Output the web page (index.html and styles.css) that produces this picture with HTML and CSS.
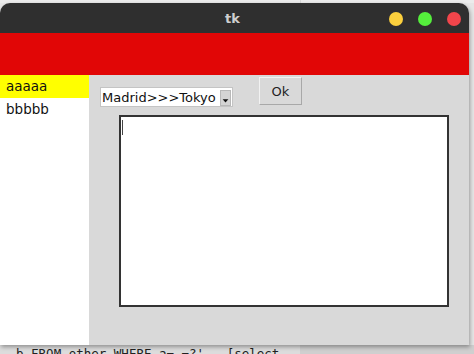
FILE: index.html
```html
<!DOCTYPE html>
<html lang="en">

<head>
    <meta charset="UTF-8">
    <meta name="viewport" content="width=device-width, initial-scale=1.0">
    <title>tk</title>

    <link rel="stylesheet" href="styles.css">
</head>

<body>
    <div class="desktop-top"></div>
    <div class="window">
        <div class="titlebar">
            <span></span>
            <span class="title">tk</span>
            <div class="lights">
                <span class="light yellow"></span>
                <span class="light green"></span>
                <span class="light red"></span>
            </div>
        </div>
        <div class="banner"></div>
        <div class="body">
            <ul class="listbox">
                <li class="selected">aaaaa</li>
                <li>bbbbb</li>
            </ul>
            <div class="main">
                <div class="toolbar">
                    <div class="option-menu">
                        <span>Madrid&gt;&gt;&gt;Tokyo</span>
                        <span class="indicator">
                            <svg width="11" height="10" viewBox="0 0 11 10">
                                <path d="M2 4 L9 4 L5.5 8 Z" fill="#111" />
                            </svg>
                        </span>
                    </div>
                    <button class="ok-button">Ok</button>
                </div>
                <div class="text-area"><span class="caret"></span></div>
            </div>
        </div>
    </div>
    <div class="terminal">
        <div class="terminal-text">b FROM other WHERE a= =?',  [select</div>
    </div>
</body>

</html>
```

FILE: styles.css
```css
* {
    box-sizing: border-box;
}

body {
    margin: 0;
    width: 474px;
    height: 354px;
    overflow: hidden;
    background-color: #e6e6e6;
    font-family: "DejaVu Sans", sans-serif;
}

.desktop-top {
    height: 3px;
    background: linear-gradient(to right, #ececec 300px, #d8d8d8 300px, #d8d8d8 301px, #ececec 301px);
}

.window {
    position: relative;
    z-index: 1;
    width: 469px;
    border-radius: 10px 10px 0 0;
    overflow: hidden;
    box-shadow: 1px 2px 4px rgba(0, 0, 0, 0.35);
}

.titlebar {
    height: 30px;
    background-color: #2f2f2f;
    display: grid;
    grid-template-columns: 1fr auto 1fr;
    align-items: center;
    padding-right: 8px;
}

.title {
    color: #cfcfcf;
    font-weight: bold;
    font-size: 13px;
    padding-left: 4px;
}

.lights {
    justify-self: end;
    display: flex;
    gap: 15px;
    margin-top: 2px;
}

.light {
    width: 14px;
    height: 14px;
    border-radius: 50%;
}

.yellow {
    background-color: #fcd03d;
}

.green {
    background-color: #55ee3c;
}

.red {
    background-color: #f2454b;
}

.banner {
    height: 42px;
    background-color: #e10606;
}

.body {
    display: flex;
    height: 270px;
}

.listbox {
    width: 89px;
    margin: 0;
    padding: 0;
    list-style: none;
    background-color: white;
    font-size: 13.5px;
    color: #111;
}

.listbox li {
    height: 22px;
    line-height: 22px;
    padding-left: 6px;
}

.listbox .selected {
    height: 23px;
    background-color: #ffff00;
}

.main {
    flex: 1;
    background-color: #d9d9d9;
    padding: 2px 0 0 11px;
}

.toolbar {
    display: flex;
    align-items: flex-start;
}

.option-menu {
    margin-top: 10px;
    width: 133px;
    height: 20px;
    background-color: white;
    border: 1px solid #c4c4c4;
    display: flex;
    align-items: center;
    justify-content: space-between;
    padding: 0 1px 0 1px;
    font-size: 13px;
    color: #111;
}

.indicator {
    width: 11px;
    height: 16px;
    margin-top: 2px;
    background-color: #d4d4d4;
    border: 1px solid #b8b8b8;
    display: flex;
    align-items: flex-end;
}

.indicator svg {
    display: block;
}

.ok-button {
    margin-left: 26px;
    width: 43px;
    height: 28px;
    background-color: #d9d9d9;
    border: 1px solid;
    border-color: #f2f2f2 #a8a8a8 #a8a8a8 #f2f2f2;
    font-family: "DejaVu Sans", sans-serif;
    font-size: 13px;
    color: #222;
    padding: 0;
}

.text-area {
    margin: 8px 0 0 19px;
    width: 330px;
    height: 192px;
    background-color: white;
    border: 2px solid #333;
    padding: 3px 0 0 1px;
}

.caret {
    display: block;
    width: 1px;
    height: 15px;
    background-color: #444;
}

.terminal {
    height: 9px;
    overflow: hidden;
    background: linear-gradient(to right, #dcdcdc 300px, #cfcfcf 300px);
}

.terminal-text {
    margin-top: 1px;
    padding-left: 16px;
    font-family: "DejaVu Sans Mono", monospace;
    font-size: 12.5px;
    line-height: 15px;
    color: #222;
    white-space: pre;
}
```
